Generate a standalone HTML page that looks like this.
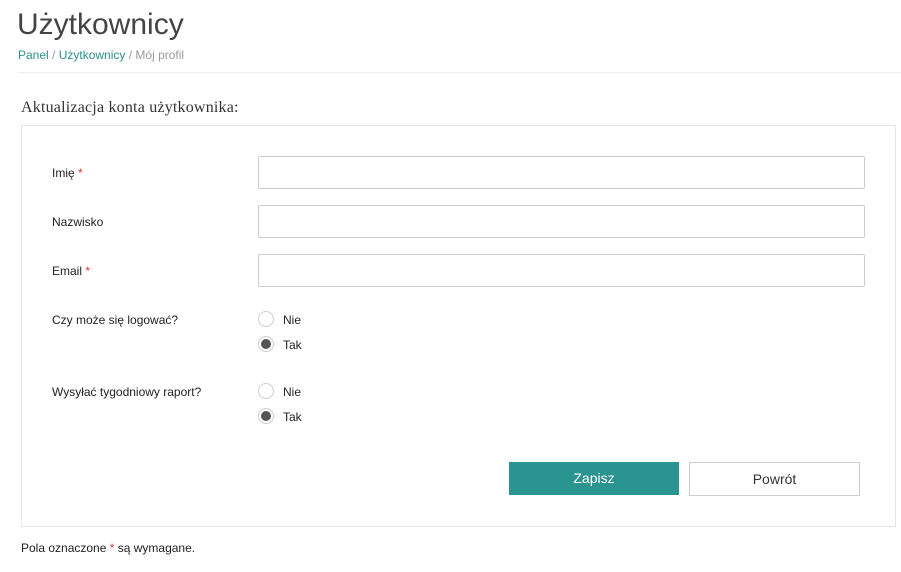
<!DOCTYPE html>
<html><head><meta charset="utf-8"><style>
body{margin:0;background:#fff;font-family:"Liberation Sans",sans-serif;font-size:12px;color:#222;width:901px;height:572px;position:relative;overflow:hidden}
.a{position:absolute}
h1{position:absolute;left:17px;top:8px;margin:0;font-weight:normal;font-size:30px;color:#444}
.bc{left:18px;top:48px;font-size:12px;color:#999}
.bc span{color:#2a8f8a}
.hr{left:17px;top:72px;width:884px;height:1px;background:#eee}
.sub{left:21px;top:99px;font-family:"Liberation Serif",serif;font-size:16px;color:#333;letter-spacing:.2px}
.box{left:21px;top:125px;width:873px;height:400px;border:1px solid #e6e6e6}
.lbl{left:52px;font-size:12px;color:#222}
.req{color:#d33}
.inp{left:258px;width:605px;height:31px;border:1px solid #ccc;border-radius:2px}
.rad{left:258px;width:14px;height:14px;border:1px solid #ccc;border-radius:50%;background:#fff}
.rad.on::after{content:"";position:absolute;left:2px;top:2px;width:10px;height:10px;border-radius:50%;background:#555}
.rl{left:283px;font-size:12px;color:#222}
.btn{top:462px;height:33px;line-height:33px;text-align:center;font-size:14px}
</style></head><body>
<h1>Użytkownicy</h1>
<div class="a bc"><span>Panel</span> / <span>Użytkownicy</span> / Mój profil</div>
<div class="a hr"></div>
<div class="a sub">Aktualizacja konta użytkownika:</div>
<div class="a box"></div>
<div class="a lbl" style="top:166px">Imię <span class="req">*</span></div>
<div class="a inp" style="top:156px"></div>
<div class="a lbl" style="top:215px">Nazwisko</div>
<div class="a inp" style="top:205px"></div>
<div class="a lbl" style="top:264px">Email <span class="req">*</span></div>
<div class="a inp" style="top:254px"></div>
<div class="a lbl" style="top:313px">Czy może się logować?</div>
<div class="a rad" style="top:311px"></div><div class="a rl" style="top:313px">Nie</div>
<div class="a rad on" style="top:336px"></div><div class="a rl" style="top:338px">Tak</div>
<div class="a lbl" style="top:385px">Wysyłać tygodniowy raport?</div>
<div class="a rad" style="top:383px"></div><div class="a rl" style="top:385px">Nie</div>
<div class="a rad on" style="top:408px"></div><div class="a rl" style="top:410px">Tak</div>
<div class="a btn" style="left:509px;width:170px;background:#2a9490;color:#fff">Zapisz</div>
<div class="a btn" style="left:689px;width:169px;border:1px solid #ccc;height:32px;line-height:32px;color:#333">Powrót</div>
<div class="a" style="left:21px;top:541px">Pola oznaczone <span class="req">*</span> są wymagane.</div>
</body></html>
